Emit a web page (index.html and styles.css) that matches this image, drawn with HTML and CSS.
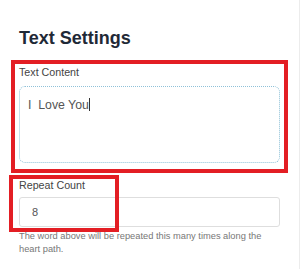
FILE: index.html
```html
<!DOCTYPE html>
<html lang="en">
<head>
    <meta charset="UTF-8">
    <title>Text Settings</title>
    <link rel="stylesheet" href="styles.css">
</head>
<body>
    <div class="panel">
        <h2>Text Settings</h2>

        <div class="form-group group-text">
            <label for="textContent">Text Content</label>
            <div class="text-box" id="textContent" role="textbox">I&nbsp;&nbsp;Love You<span class="caret"></span></div>
        </div>

        <div class="form-group">
            <label for="repeatCount">Repeat Count</label>
            <input type="text" id="repeatCount" value="8">
            <p class="help-text">The word above will be repeated this many times along the heart path.</p>
        </div>

        <!-- annotation boxes drawn over the form -->
        <div class="mark mark-text"></div>
        <div class="mark mark-count"></div>
    </div>
</body>
</html>
```

FILE: styles.css
```css
body {
    margin: 0;
    font-family: "Liberation Sans", Arial, sans-serif;
    background-color: #fff;
}

.panel {
    position: relative;
    box-sizing: border-box;
    width: 300px;
    height: 269px;
    padding: 28px 19px 0 19px;
    border-right: 1px solid #ececec;
}

h2 {
    margin: 0 0 17px 0;
    font-size: 18px;
    line-height: 21px;
    font-weight: bold;
    color: #1f2937;
}

label {
    display: block;
    font-size: 10.7px;
    line-height: 13px;
    color: #444;
    margin-bottom: 5px;
}

.group-text {
    margin-bottom: 16px;
}

.group-text label {
    margin-bottom: 7px;
}

.text-box {
    box-sizing: border-box;
    height: 77px;
    padding: 11px 8px;
    border: 1px dotted #8fc1d8;
    border-radius: 6px;
    font-size: 12.3px;
    line-height: 15px;
    color: #555;
    white-space: pre;
}

.caret {
    display: inline-block;
    width: 0;
    height: 13px;
    border-left: 1px solid #333;
    vertical-align: -2px;
}

input[type="text"] {
    display: block;
    box-sizing: border-box;
    width: 100%;
    height: 30px;
    margin: 0;
    padding: 0 12px;
    border: 1px solid #dedede;
    border-radius: 3px;
    font-family: "Liberation Sans", Arial, sans-serif;
    font-size: 11px;
    color: #555;
}

.help-text {
    margin: 3px 0 0 0;
    font-size: 9.3px;
    line-height: 13.3px;
    color: #777;
}

.mark {
    position: absolute;
    box-sizing: border-box;
    border: 4px solid #e31e24;
}

.mark-text {
    left: 11px;
    top: 60px;
    width: 277px;
    height: 113px;
}

.mark-count {
    left: 9px;
    top: 175px;
    width: 110px;
    height: 57px;
}
```
